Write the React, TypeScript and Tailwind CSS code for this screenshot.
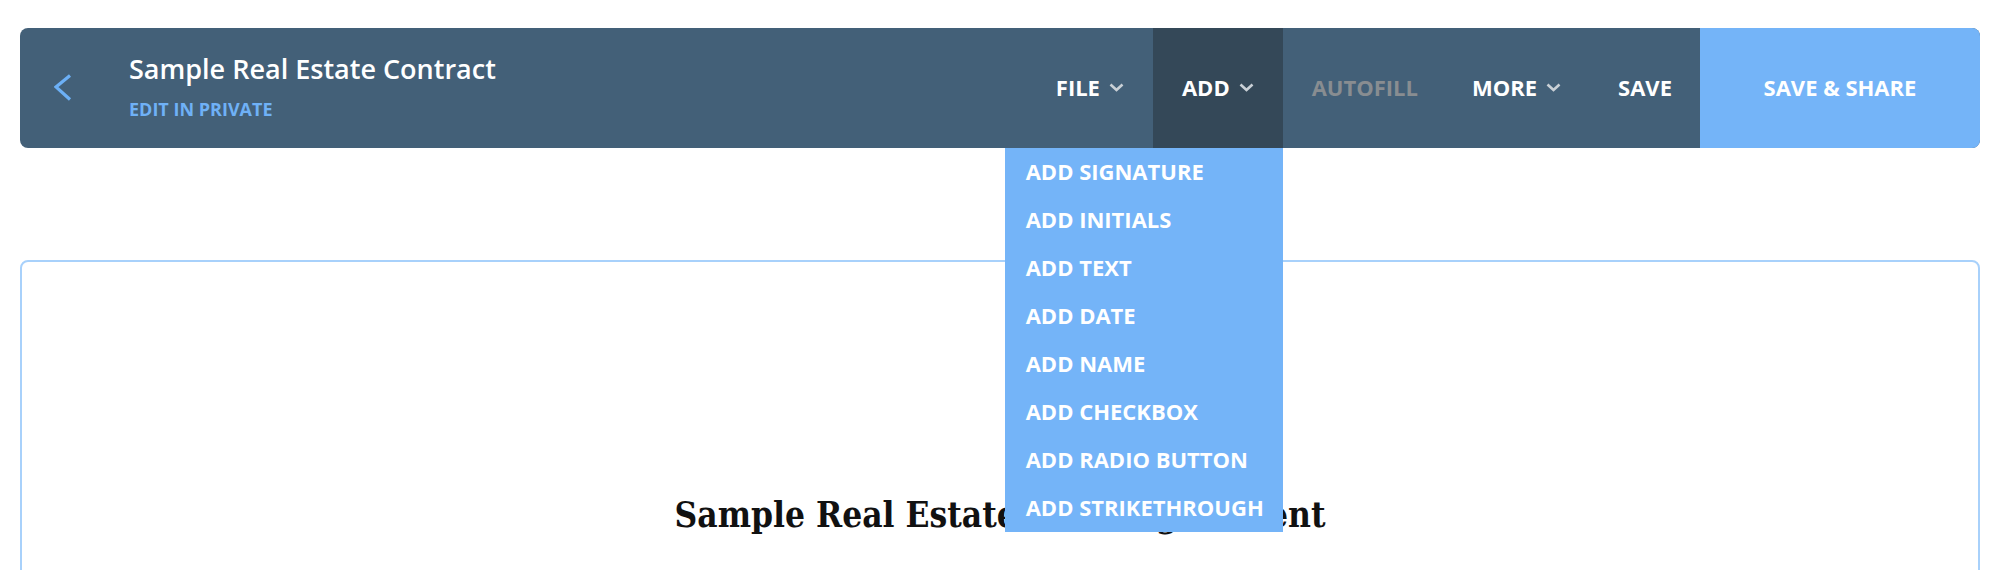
import React from "react";

const addItems = [
  "ADD SIGNATURE",
  "ADD INITIALS",
  "ADD TEXT",
  "ADD DATE",
  "ADD NAME",
  "ADD CHECKBOX",
  "ADD RADIO BUTTON",
  "ADD STRIKETHROUGH",
];

// small caret used next to menu labels
function Caret() {
  return (
    <svg width="15" height="9" viewBox="0 0 15 9" className="ml-[9px] mt-[1px]">
      <polyline points="1.5,1.5 7.5,7 13.5,1.5" fill="none" stroke="#c9d0d6" strokeWidth="2.6" />
    </svg>
  );
}

export default function App() {
  return (
    <div className="w-[2000px] h-[570px] overflow-hidden bg-white font-['Open_Sans',sans-serif]">
      <div className="px-5 pt-7">
        {/* Top editor bar */}
        <header className="relative z-10 flex h-[120px] items-stretch rounded-lg bg-[#436078]">
          <div className="flex items-center">
            <button className="ml-[34px] flex items-center">
              <svg width="18" height="28" viewBox="0 0 18 28">
                <polyline points="16,1.5 2,13 16,25.5" fill="none" stroke="#6cb0f6" strokeWidth="3.2" />
              </svg>
            </button>
            <div className="ml-[57px] flex flex-col pb-[3px]">
              <h1 className="text-[27px] leading-[30px] font-semibold text-white">Sample Real Estate Contract</h1>
              <span className="mt-[15px] text-[18px] leading-[20px] font-bold text-[#6fb1f6]">EDIT IN PRIVATE</span>
            </div>
          </div>

          <div className="flex-1" />

          <nav className="flex items-stretch text-[22px] leading-[30px] font-bold text-white">
            <button className="flex items-center pb-[2px] px-[29px]">
              FILE
              <Caret />
            </button>
            <div className="relative flex">
              <button className="flex items-center bg-[#344858] pb-[2px] px-[29px]">
                ADD
                <Caret />
              </button>
              <ul className="absolute right-0 top-full w-[278px] bg-[#74b4f8] text-[22px] font-bold text-white">
                {addItems.map((item) => (
                  <li key={item} className="flex h-[48px] items-center pl-[21px] pb-[2px]">
                    {item}
                  </li>
                ))}
              </ul>
            </div>
            <button className="flex items-center pb-[2px] pl-[29px] pr-[25px] text-[#888d91]">AUTOFILL</button>
            <button className="flex items-center pb-[2px] px-[29px]">
              MORE
              <Caret />
            </button>
            <button className="flex items-center pb-[2px] px-[28px]">SAVE</button>
            <button className="flex w-[280px] items-center justify-center rounded-r-lg bg-[#74b4f8] pb-[2px]">SAVE &amp; SHARE</button>
          </nav>
        </header>

        {/* Document page */}
        <div className="mt-[112px] h-[420px] rounded-lg border-2 border-[#a8d1fb] bg-white">
          <h2 className="pt-[233px] text-center font-['DejaVu_Serif_Condensed','DejaVu_Serif',serif] text-[35px] leading-[40px] font-bold text-[#111]">
            Sample Real Estate Sales Agreement
          </h2>
        </div>
      </div>
    </div>
  );
}
